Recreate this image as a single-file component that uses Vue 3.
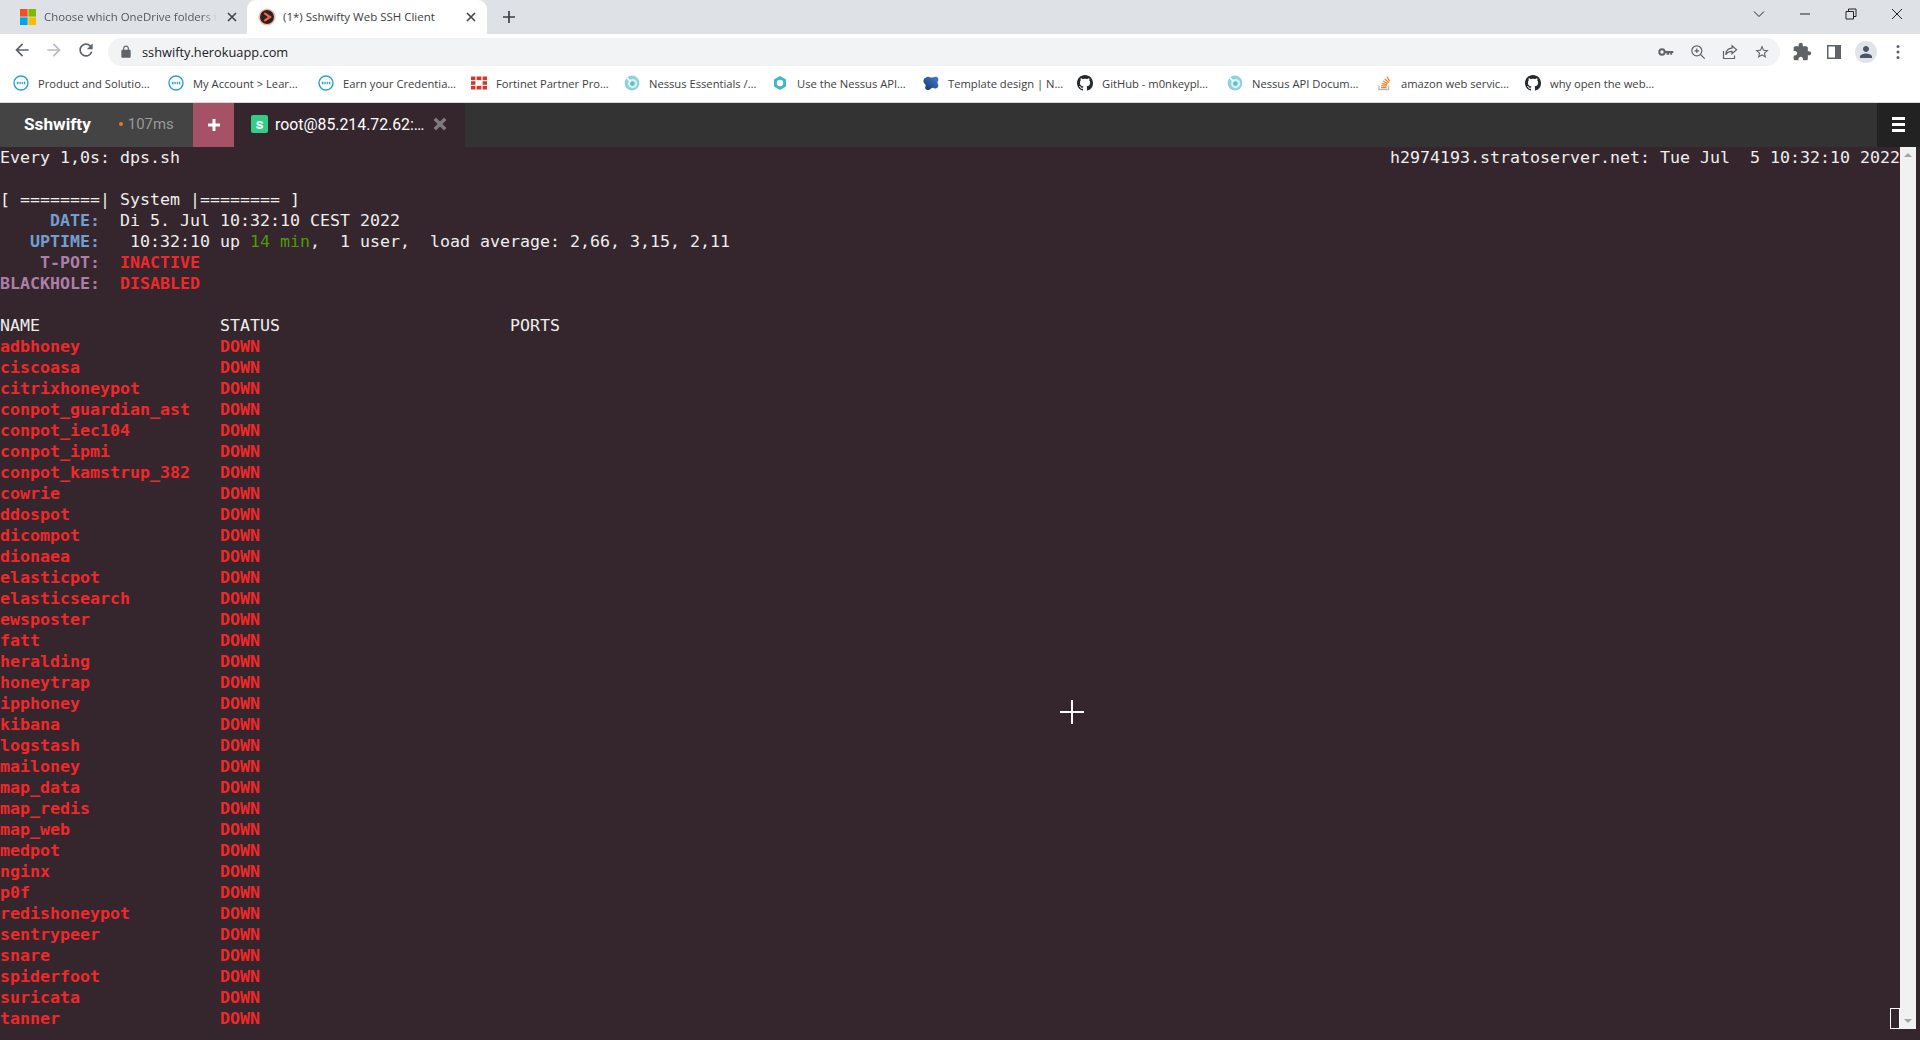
<script setup>
const bookmarks = [
  { icon: 'dell', label: 'Product and Solutio…', width: 155 },
  { icon: 'dell', label: 'My Account > Lear…', width: 150 },
  { icon: 'dell', label: 'Earn your Credentia…', width: 153 },
  { icon: 'fortinet', label: 'Fortinet Partner Pro…', width: 153 },
  { icon: 'nessus', label: 'Nessus Essentials /…', width: 148 },
  { icon: 'ring', label: 'Use the Nessus API…', width: 151 },
  { icon: 'blob', label: 'Template design | N…', width: 154 },
  { icon: 'github', label: 'GitHub - m0nkeypl…', width: 150 },
  { icon: 'nessus', label: 'Nessus API Docum…', width: 149 },
  { icon: 'stack', label: 'amazon web servic…', width: 149 },
  { icon: 'github', label: 'why open the web…', width: 130 }
]
const services = [
  'adbhoney', 'ciscoasa', 'citrixhoneypot', 'conpot_guardian_ast', 'conpot_iec104', 'conpot_ipmi',
  'conpot_kamstrup_382', 'cowrie', 'ddospot', 'dicompot', 'dionaea', 'elasticpot', 'elasticsearch',
  'ewsposter', 'fatt', 'heralding', 'honeytrap', 'ipphoney', 'kibana', 'logstash', 'mailoney',
  'map_data', 'map_redis', 'map_web', 'medpot', 'nginx', 'p0f', 'redishoneypot', 'sentrypeer',
  'snare', 'spiderfoot', 'suricata', 'tanner'
]
const lines = [
  [],
  [{ t: '[ ========| System |======== ]' }],
  [{ t: '     DATE:', c: 'blue strong' }, { t: '  Di 5. Jul 10:32:10 CEST 2022' }],
  [{ t: '   UPTIME:', c: 'blue strong' }, { t: '   10:32:10 up ' }, { t: '14 min', c: 'green' }, { t: ',  1 user,  load average: 2,66, 3,15, 2,11' }],
  [{ t: '    T-POT:', c: 'purple strong' }, { t: '  ' }, { t: 'INACTIVE', c: 'red strong' }],
  [{ t: 'BLACKHOLE:', c: 'purple strong' }, { t: '  ' }, { t: 'DISABLED', c: 'red strong' }],
  [],
  [{ t: 'NAME'.padEnd(22) + 'STATUS'.padEnd(29) + 'PORTS' }],
  ...services.map((n) => [{ t: n.padEnd(22) + 'DOWN', c: 'red strong' }])
]
const headLeft = 'Every 1,0s: dps.sh'
const headRight = 'h2974193.stratoserver.net: Tue Jul  5 10:32:10 2022'
const githubPath = 'M8 0C3.58 0 0 3.58 0 8c0 3.54 2.29 6.53 5.47 7.59.4.07.55-.17.55-.38 0-.19-.01-.82-.01-1.49-2.01.37-2.53-.49-2.69-.94-.09-.23-.48-.94-.82-1.13-.28-.15-.68-.52-.01-.53.63-.01 1.08.58 1.23.82.72 1.21 1.87.87 2.33.66.07-.52.28-.87.51-1.07-1.78-.2-3.64-.89-3.64-3.95 0-.87.31-1.59.82-2.15-.08-.2-.36-1.02.08-2.12 0 0 .67-.21 2.2.82.64-.18 1.32-.27 2-.27.68 0 1.36.09 2 .27 1.53-1.04 2.2-.82 2.2-.82.44 1.1.16 1.92.08 2.12.51.56.82 1.27.82 2.15 0 3.07-1.87 3.75-3.65 3.95.29.25.54.73.54 1.48 0 1.07-.01 1.93-.01 2.2 0 .21.15.46.55.38A8.013 8.013 0 0016 8c0-4.42-3.58-8-8-8z'
</script>

<template>
  <div class="page">
    <div class="tabstrip">
      <div class="tab">
        <svg class="fav" viewBox="0 0 16 16">
          <rect x="0" y="0" width="7.6" height="7.6" fill="#f25022" />
          <rect x="8.4" y="0" width="7.6" height="7.6" fill="#7fba00" />
          <rect x="0" y="8.4" width="7.6" height="7.6" fill="#00a4ef" />
          <rect x="8.4" y="8.4" width="7.6" height="7.6" fill="#ffb900" />
        </svg>
        <span class="tab-title faded">Choose which OneDrive folders to sync</span>
        <svg class="tab-x" viewBox="0 0 10 10"><path d="M1 1l8 8M9 1l-8 8" /></svg>
      </div>
      <div class="tab active">
        <svg class="fav" viewBox="0 0 16 16">
          <circle cx="8" cy="8" r="7.6" fill="#f3b8a0" />
          <circle cx="8" cy="8" r="6.2" fill="#2c2226" />
          <path d="M5.6 4.6L10.6 8l-5 3.4" fill="none" stroke="#f26a3a" stroke-width="2" />
        </svg>
        <span class="tab-title">(1*) Sshwifty Web SSH Client</span>
        <svg class="tab-x" viewBox="0 0 10 10"><path d="M1 1l8 8M9 1l-8 8" /></svg>
      </div>
      <svg class="new-tab" viewBox="0 0 12 12"><path d="M6 0v12M0 6h12" /></svg>
      <div class="win-controls">
        <span class="win-btn"><svg viewBox="0 0 12 12"><path d="M1 3.5l5 5 5-5" /></svg></span>
        <span class="win-btn"><svg viewBox="0 0 12 12"><path d="M1 6h10" /></svg></span>
        <span class="win-btn"><svg viewBox="0 0 12 12"><path d="M1 3.5h7.5V11H1zM3.5 3.5V1H11v7.5H8.5" /></svg></span>
        <span class="win-btn"><svg viewBox="0 0 12 12"><path d="M1 1l10 10M11 1L1 11" /></svg></span>
      </div>
    </div>

    <div class="toolbar">
      <div class="nav-btn"><svg viewBox="0 0 24 24"><path d="M20 11H7.83l5.59-5.59L12 4l-8 8 8 8 1.41-1.41L7.83 13H20v-2z" /></svg></div>
      <div class="nav-btn off"><svg viewBox="0 0 24 24"><path d="M12 4l-1.41 1.41L16.17 11H4v2h12.17l-5.58 5.59L12 20l8-8z" /></svg></div>
      <div class="nav-btn"><svg viewBox="0 0 24 24"><path d="M17.65 6.35A7.958 7.958 0 0012 4c-4.42 0-7.99 3.58-7.99 8s3.57 8 7.99 8c3.73 0 6.84-2.55 7.73-6h-2.08A5.99 5.99 0 0112 18c-3.31 0-6-2.69-6-6s2.69-6 6-6c1.66 0 3.14.69 4.22 1.78L13 11h7V4l-2.35 2.35z" /></svg></div>
      <div class="omnibox">
        <svg class="lock" viewBox="0 0 24 24"><path d="M18 8h-1V6c0-2.76-2.24-5-5-5S7 3.24 7 6v2H6c-1.1 0-2 .9-2 2v10c0 1.1.9 2 2 2h12c1.1 0 2-.9 2-2V10c0-1.1-.9-2-2-2zM9 6c0-1.66 1.34-3 3-3s3 1.34 3 3v2H9V6z" /></svg>
        <span class="url">sshwifty.herokuapp.com</span>
        <div class="omni-icons">
          <div class="omni-btn">
            <svg viewBox="0 0 16 16"><circle cx="4" cy="8" r="2.7" fill="none" stroke="#5f6368" stroke-width="2" /><path d="M6.5 7h8.8v2h-1.2v1.8h-1.8V9h-1v1.8H8.6V9H6.5z" fill="#5f6368" /></svg>
          </div>
          <div class="omni-btn">
            <svg viewBox="0 0 16 16" class="line"><circle cx="6.8" cy="6.8" r="5" /><path d="M10.5 10.5l4.2 4.2M4.5 6.8h4.6M6.8 4.5v4.6" /></svg>
          </div>
          <div class="omni-btn">
            <svg viewBox="0 0 16 16" class="line"><path d="M10 1.8l4.6 4-4.6 4V7.4C6.8 7.4 5 8.6 3.8 10.8 4 6.8 6.4 4.4 10 4.2zM1.5 7v7.5h11V11.5" /></svg>
          </div>
          <div class="omni-btn">
            <svg viewBox="0 0 24 24"><path fill="#5f6368" d="M22 9.24l-7.19-.62L12 2 9.19 8.63 2 9.24l5.46 4.73L5.82 21 12 17.27 18.18 21l-1.63-7.03L22 9.24zM12 15.4l-3.76 2.27 1-4.28-3.32-2.88 4.38-.38L12 6.1l1.71 4.04 4.38.38-3.32 2.88 1 4.28L12 15.4z" /></svg>
          </div>
        </div>
      </div>
      <div class="tool-right">
        <div class="nav-btn"><svg viewBox="0 0 24 24"><path d="M20.5 11H19V7c0-1.1-.9-2-2-2h-4V3.5C13 2.12 11.88 1 10.5 1S8 2.12 8 3.5V5H4c-1.1 0-1.99.9-1.99 2v3.8H3.5c1.49 0 2.7 1.21 2.7 2.7s-1.21 2.7-2.7 2.7H2V20c0 1.1.9 2 2 2h3.8v-1.5c0-1.49 1.21-2.7 2.7-2.7 1.49 0 2.7 1.21 2.7 2.7V22H17c1.1 0 2-.9 2-2v-4h1.5c1.38 0 2.5-1.12 2.5-2.5S21.88 11 20.5 11z" /></svg></div>
        <div class="nav-btn"><svg class="panel" viewBox="0 0 14 14"><path fill-rule="evenodd" d="M0 0h14v14H0zM1.5 1.5v11H8v-11z" /></svg></div>
        <div class="nav-btn">
          <span class="avatar"><svg viewBox="0 0 24 24"><path d="M12 12c2.21 0 4-1.79 4-4s-1.79-4-4-4-4 1.79-4 4 1.79 4 4 4zm0 2c-2.67 0-8 1.34-8 4v2h16v-2c0-2.66-5.33-4-8-4z" /></svg></span>
        </div>
        <div class="nav-btn"><svg class="dots" viewBox="0 0 4 16"><circle cx="2" cy="2.5" r="1.5" /><circle cx="2" cy="8" r="1.5" /><circle cx="2" cy="13.5" r="1.5" /></svg></div>
      </div>
    </div>

    <div class="bookmarks">
      <div v-for="b in bookmarks" :key="b.label" class="bookmark" :style="{ width: b.width + 'px' }">
        <svg v-if="b.icon === 'dell'" class="fav" viewBox="0 0 16 16">
          <circle cx="8" cy="8" r="7" fill="#fff" stroke="#2a9fd8" stroke-width="1.4" />
          <path d="M3.8 8h1.700M6.400 8h1.300M8.700 8h1.200M10.800 8h1.500" stroke="#2a9fd8" stroke-width="2.600" />
        </svg>
        <svg v-else-if="b.icon === 'fortinet'" class="fav" viewBox="0 0 16 16" fill="#d9362b">
          <rect x="0" y="1.5" width="4.4" height="3.6" /><rect x="5.6" y="1.5" width="4.8" height="3.6" /><rect x="11.6" y="1.5" width="4.4" height="3.6" />
          <rect x="0" y="6.2" width="4.4" height="3.6" /><rect x="11.6" y="6.2" width="4.4" height="3.6" />
          <rect x="0" y="10.9" width="4.4" height="3.6" /><rect x="5.6" y="10.9" width="4.8" height="3.6" /><rect x="11.6" y="10.9" width="4.4" height="3.6" />
        </svg>
        <svg v-else-if="b.icon === 'nessus'" class="fav" viewBox="0 0 16 16">
          <circle cx="8" cy="8" r="7.4" fill="#8ed3dc" />
          <circle cx="8.6" cy="8.6" r="4.6" fill="#d6f0f3" />
          <path d="M3 3l4.5 4.5" stroke="#fff" stroke-width="1.6" />
          <circle cx="8.4" cy="8.6" r="2.4" fill="#5fbfcc" />
        </svg>
        <svg v-else-if="b.icon === 'ring'" class="fav" viewBox="0 0 16 16">
          <path d="M8 1l6 3.4v7.2L8 15l-6-3.4V4.4z" fill="#3db8c6" />
          <circle cx="8" cy="8" r="3.2" fill="#fff" />
        </svg>
        <svg v-else-if="b.icon === 'blob'" class="fav" viewBox="0 0 16 16">
          <defs>
            <linearGradient id="blobGrad" x1="1" y1="0" x2="0" y2="1">
              <stop offset="0" stop-color="#3f7fd8" />
              <stop offset="1" stop-color="#1d3560" />
            </linearGradient>
          </defs>
          <path d="M4 2c2-1 3 .5 4.5.6C10 2.700 11.500 .9 14 2c2 1 1.500 3.500.6 5-.5 1 1.400 2.600.6 4.600-.8 2-3 2.400-4.600 1.400-1.200-.7-2.200.4-3.600 1.400-1.600 1-4.400.7-4.800-1.200-.3-1.400.9-2.200.3-3.400C1.700 8.500-.5 7 .8 4.500 1.500 3 2.700 2.600 4 2z" fill="url(#blobGrad)" />
        </svg>
        <svg v-else-if="b.icon === 'github'" class="fav" viewBox="0 0 16 16"><path :d="githubPath" fill="#24292e" /></svg>
        <svg v-else class="fav" viewBox="0 0 16 16">
          <path d="M3 10.500v4h9.500v-4" fill="none" stroke="#bcbbbb" stroke-width="1.300" />
          <path d="M5 12.700h5.500M5.200 10.600l5.400.6M5.800 8.300l5.200 1.500M7 6l4.600 2.800M8.800 3.800l3.900 3.900M11.200 1.800l2.400 4.600" fill="none" stroke="#f48024" stroke-width="1.300" />
        </svg>
        <span class="bookmark-label">{{ b.label }}</span>
      </div>
    </div>

    <div class="app-bar">
      <div class="brand">
        <span class="brand-name">Sshwifty</span>
        <span class="ping"><i class="ping-dot"></i>107ms</span>
      </div>
      <div class="add-btn">
        <svg viewBox="0 0 12 12"><path d="M6 0v12M0 6h12" /></svg>
      </div>
      <div class="session">
        <span class="badge">S</span>
        <span class="session-title">root@85.214.72.62:…</span>
        <svg class="session-x" viewBox="0 0 12 12"><path d="M1.500 1.500l9 9M10.500 1.500l-9 9" /></svg>
      </div>
      <div class="menu-btn"><i></i><i></i><i></i></div>
    </div>

    <div class="terminal">
      <div class="screen">
        <div class="row split"><span>{{ headLeft }}</span><span>{{ headRight }}</span></div>
        <div v-for="(segs, i) in lines" :key="i" class="row"><span v-for="(s, j) in segs" :key="j" :class="s.c">{{ s.t }}</span></div>
        <span class="cursor"></span>
      </div>
      <div class="scrollbar">
        <span class="arrow up"></span>
        <span class="arrow down"></span>
      </div>
      <svg class="crosshair" viewBox="0 0 24 24"><path d="M12 0v24M0 12h24" /></svg>
    </div>
  </div>
</template>

<style>
html, body { margin: 0; background: #35262e; overflow: hidden; }
</style>

<style scoped>
.page { width: 1920px; height: 1040px; display: flex; flex-direction: column; overflow: hidden; font-family: "Open Sans", "Noto Sans", sans-serif; }
.fav { width: 16px; height: 16px; flex: none; display: block; }

.tabstrip { height: 34px; background: #dee1e6; display: flex; align-items: stretch; flex: none; }
.tab { width: 247px; box-sizing: border-box; padding: 0 10px 1px 20px; display: flex; align-items: center; gap: 8px; }
.tab.active { width: 240px; padding: 0 11px 1px 11px; background: #fff; border-radius: 9px 9px 0 0; }
.tab.active .fav { width: 18px; height: 18px; margin-right: -1px; }
.tab-title { flex: 1; font-size: 11.5px; white-space: nowrap; overflow: hidden; color: #3c4043; }
.tab-title.faded { font-size: 11.4px; color: #55585c; -webkit-mask-image: linear-gradient(to right, #000 90%, transparent 99%); mask-image: linear-gradient(to right, #000 90%, transparent 99%); }
.tab-x { width: 10px; height: 10px; flex: none; fill: none; stroke: #45484c; stroke-width: 1.7; }
.new-tab { width: 12px; height: 12px; align-self: center; margin-left: 16px; fill: none; stroke: #3c4043; stroke-width: 1.7; }
.win-controls { margin-left: auto; display: flex; }
.win-btn { width: 46px; display: flex; align-items: center; justify-content: center; height: 28px; }
.win-btn svg { width: 12px; height: 12px; fill: none; stroke: #222; stroke-width: 1; }

.toolbar { height: 32px; background: #fff; display: flex; align-items: center; padding-left: 6px; flex: none; }
.nav-btn { width: 32px; height: 32px; display: flex; align-items: center; justify-content: center; flex: none; }
.nav-btn svg { width: 20px; height: 20px; fill: #5f6368; }
.nav-btn.off svg { fill: #b9bbbe; }
.nav-btn .panel { width: 14px; height: 14px; }
.nav-btn .dots { width: 4px; height: 16px; }
.omnibox { margin-left: 6px; width: 1672px; height: 28px; background: #f1f3f4; border-radius: 14px; display: flex; align-items: center; padding-left: 11px; box-sizing: border-box; flex: none; margin-top: 4px; }
.lock { width: 14px; height: 14px; fill: #5f6368; flex: none; }
.url { margin-left: 9px; font-size: 12.8px; color: #202124; }
.omni-icons { margin-left: auto; display: flex; padding-right: 2px; }
.omni-btn { width: 32px; height: 28px; display: flex; align-items: center; justify-content: center; }
.omni-btn svg { width: 16px; height: 16px; }
.omni-btn svg.line { fill: none; stroke: #5f6368; stroke-width: 1.200; }
.tool-right { display: flex; margin-left: 6px; margin-top: 4px; }
.avatar { width: 22px; height: 22px; border-radius: 50%; background: #e0e3e7; display: flex; align-items: center; justify-content: center; }
.avatar svg { width: 18px; height: 18px; fill: #4b5568; }

.bookmarks { height: 34px; background: #fff; border-bottom: 1px solid #d6d8da; display: flex; align-items: center; padding: 0 0 2px 13px; flex: none; }
.bookmark { display: flex; align-items: center; gap: 9px; flex: none; }
.bookmark-label { font-size: 11.2px; color: #3c4043; white-space: nowrap; }

.app-bar { height: 44px; background: #333; display: flex; flex: none; font-family: Roboto, sans-serif; }
.brand { width: 193px; background: #444; display: flex; align-items: center; padding: 0 0 2px 24px; box-sizing: border-box; }
.brand-name { font-size: 17.2px; font-weight: 700; color: #fff; }
.ping { margin-left: 28px; font-size: 14.9px; color: #9a9a9a; display: flex; align-items: center; }
.ping-dot { width: 4px; height: 4px; border-radius: 50%; background: #e67a1e; margin-right: 5px; }
.add-btn { width: 41px; background: #a45264; display: flex; align-items: center; justify-content: center; padding-bottom: 1px; box-sizing: border-box; }
.add-btn svg { width: 12px; height: 12px; fill: none; stroke: #fff; stroke-width: 3; }
.session { width: 231px; background: #35262e; display: flex; align-items: center; padding: 0 0 2px 17px; box-sizing: border-box; }
.badge { width: 17px; height: 18px; border-radius: 2px; background: #33cc88; color: #fff; font-size: 15px; font-weight: 700; display: flex; align-items: center; justify-content: center; text-transform: lowercase; }
.session-title { margin-left: 7px; font-size: 15.8px; color: #fff; white-space: nowrap; }
.session-x { width: 14px; height: 14px; margin-left: 9px; fill: none; stroke: #807a7c; stroke-width: 3; }
.menu-btn { margin-left: auto; width: 43px; background: #222; display: flex; flex-direction: column; align-items: center; justify-content: center; gap: 3px; padding-bottom: 1px; box-sizing: border-box; }
.menu-btn i { width: 13px; height: 3px; background: #fff; display: block; }

.terminal { flex: 1; background: #35262e; display: flex; align-items: flex-start; position: relative; min-height: 0; }
.screen { width: 1900px; flex: none; position: relative; font-family: "DejaVu Sans Mono", monospace; font-size: 16.61px; line-height: 21px; color: #eeeeec; white-space: pre; }
.row { height: 21px; }
.split { display: flex; justify-content: space-between; }
.blue { color: #729fcf; }
.purple { color: #ad7fa8; }
.green { color: #4e9a06; }
.red { color: #ef2929; }
.strong { font-weight: 700; }
.cursor { position: absolute; right: 0; bottom: 0; width: 10px; height: 21px; box-sizing: border-box; border: 1px solid #fff; }
.scrollbar { width: 16px; height: 882px; background: #f1f1f1; position: relative; flex: none; }
.arrow { position: absolute; left: 4px; width: 0; height: 0; border-left: 4px solid transparent; border-right: 4px solid transparent; }
.arrow.up { top: 6px; border-bottom: 4px solid #a3a3a3; }
.arrow.down { bottom: 6px; border-top: 4px solid #a3a3a3; }
.crosshair { position: absolute; left: 1060px; top: 553px; width: 24px; height: 24px; fill: none; stroke: #fff; stroke-width: 2; }
</style>
